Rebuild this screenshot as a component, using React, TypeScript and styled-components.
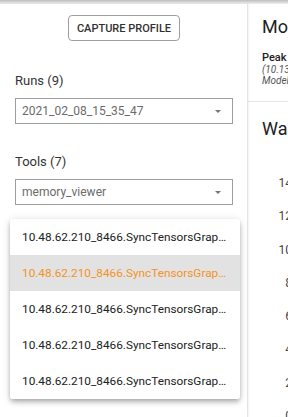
import React from 'react'
import styled, { createGlobalStyle } from 'styled-components'

const GlobalStyle = createGlobalStyle`
  html, body {
    margin: 0;
    padding: 0;
    width: 288px;
    height: 417px;
    overflow: hidden;
    background: #ffffff;
    font-family: Roboto, "Liberation Sans", sans-serif;
  }
`

const Page = styled.div`
  position: relative;
  width: 288px;
  height: 417px;
  overflow: hidden;
`

const TopShadow = styled.div`
  height: 4px;
  background: linear-gradient(180deg, #bdbdbd 0%, #d6d6d6 50%, #efefef 100%);
`

const Body = styled.div`
  display: flex;
  height: 413px;
`

const Sidebar = styled.aside`
  position: relative;
  width: 248px;
  flex-shrink: 0;
  border-right: 1px solid #e4e4e4;
  box-shadow: 1px 0 2px rgba(0, 0, 0, 0.05);
  padding: 11px 0 0 15px;
  box-sizing: border-box;
`

const CaptureButton = styled.button`
  display: block;
  margin: 0 0 0 53px;
  width: 112px;
  height: 26px;
  border: 1px solid #9e9e9e;
  border-radius: 4px;
  background: #ffffff;
  color: #303030;
  font-family: Roboto, "Liberation Sans", sans-serif;
  font-size: 11px;
  font-weight: 500;
  letter-spacing: 0;
  padding: 0;
`

const Label = styled.div<{ $top: number }>`
  margin-top: ${p => p.$top}px;
  font-size: 13px;
  color: #333333;
  line-height: 16px;
`

const Select = styled.div`
  margin-top: 9px;
  width: 218px;
  height: 26px;
  box-sizing: border-box;
  border: 1px solid #9e9e9e;
  display: flex;
  align-items: center;
  justify-content: space-between;
  padding: 0 11px 0 6px;
  font-size: 12px;
  color: #6b6b6b;
`

const Caret = styled.span`
  width: 0;
  height: 0;
  border-left: 3.5px solid transparent;
  border-right: 3.5px solid transparent;
  border-top: 3.5px solid #757575;
`

const Menu = styled.div`
  position: absolute;
  left: 10px;
  top: 215px;
  width: 230px;
  background: #ffffff;
  border-radius: 3px;
  box-shadow: 0 2px 4px -1px rgba(0, 0, 0, 0.2), 0 4px 5px 0 rgba(0, 0, 0, 0.14),
    0 1px 10px 0 rgba(0, 0, 0, 0.12);
  overflow: hidden;
`

const MenuItem = styled.div<{ $active?: boolean }>`
  height: 36px;
  display: flex;
  align-items: center;
  padding: 0 12px 0 12px;
  font-size: 11.8px;
  color: ${p => (p.$active ? '#f5921e' : '#212121')};
  background: ${p => (p.$active ? '#e2e2e2' : '#ffffff')};
  white-space: nowrap;
  overflow: hidden;
`

const MenuText = styled.span`
  overflow: hidden;
  text-overflow: ellipsis;
`

const Main = styled.main`
  flex: 1;
  min-width: 0;
  overflow: hidden;
  background: #ffffff;
`

const Card = styled.section`
  width: 600px;
  padding: 12px 0 0 14px;
  box-sizing: border-box;
  background: #ffffff;
`

const SummaryCard = styled(Card)`
  height: 98px;
  border-bottom: 1px solid #e6e6e6;
  box-shadow: 0 2px 2px rgba(0, 0, 0, 0.05);
`

const CardTitle = styled.h2`
  margin: 0;
  font-size: 18px;
  font-weight: 400;
  color: #212121;
  line-height: 22px;
  white-space: nowrap;
`

const Peak = styled.div`
  margin-top: 14px;
  font-size: 11px;
  font-weight: 500;
  color: #212121;
  line-height: 12px;
  white-space: nowrap;
`

const Note = styled.div`
  font-size: 10px;
  font-style: italic;
  color: #555555;
  line-height: 11px;
  white-space: nowrap;
`

const ChartCard = styled(Card)`
  padding-top: 16px;
`

const Axis = styled.div`
  margin-top: 36px;
  width: 30px;
  display: flex;
  flex-direction: column;
  gap: 19.3px;
`

const Tick = styled.div`
  text-align: right;
  font-size: 12px;
  line-height: 14px;
  color: #444444;
`

const items = [0, 1, 2, 3, 4]
const ticks = ['14', '12', '10', '8', '6', '4', '2', '0']

export default function App() {
  return (
    <Page>
      <GlobalStyle />
      <TopShadow />
      <Body>
        <Sidebar>
          <CaptureButton>CAPTURE PROFILE</CaptureButton>
          <Label $top={32}>Runs (9)</Label>
          <Select>
            <span>2021_02_08_15_35_47</span>
            <Caret />
          </Select>
          <Label $top={30}>Tools (7)</Label>
          <Select>
            <span>memory_viewer</span>
            <Caret />
          </Select>
          <Menu>
            {items.map(i => (
              <MenuItem key={i} $active={i === 1}>
                <MenuText>10.48.62.210_8466.SyncTensorsGraph.12345(1)</MenuText>
              </MenuItem>
            ))}
          </Menu>
        </Sidebar>
        <Main>
          <SummaryCard>
            <CardTitle>Module Name: SyncTensorsGraph</CardTitle>
            <Peak>Peak memory allocation is 14.12 MiB</Peak>
            <Note>(10.13 MiB from parameters, 3.99 MiB from temporaries)</Note>
            <Note>Modeling padding: 0.00 MiB</Note>
          </SummaryCard>
          <ChartCard>
            <CardTitle>Wasted memory over program order</CardTitle>
            <Axis>
              {ticks.map(t => (
                <Tick key={t}>{t}</Tick>
              ))}
            </Axis>
          </ChartCard>
        </Main>
      </Body>
    </Page>
  )
}
